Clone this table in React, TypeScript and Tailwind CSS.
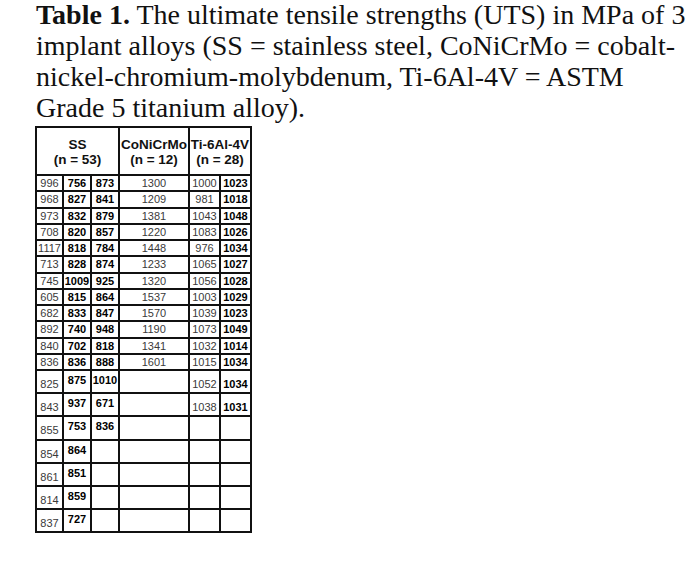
import React from "react";

type Cell = number | "";

const upper: Cell[][] = [
  [996, 756, 873, 1300, 1000, 1023],
  [968, 827, 841, 1209, 981, 1018],
  [973, 832, 879, 1381, 1043, 1048],
  [708, 820, 857, 1220, 1083, 1026],
  [1117, 818, 784, 1448, 976, 1034],
  [713, 828, 874, 1233, 1065, 1027],
  [745, 1009, 925, 1320, 1056, 1028],
  [605, 815, 864, 1537, 1003, 1029],
  [682, 833, 847, 1570, 1039, 1023],
  [892, 740, 948, 1190, 1073, 1049],
  [840, 702, 818, 1341, 1032, 1014],
  [836, 836, 888, 1601, 1015, 1034],
];

const lower: Cell[][] = [
  [825, 875, 1010, "", 1052, 1034],
  [843, 937, 671, "", 1038, 1031],
  [855, 753, 836, "", "", ""],
  [854, 864, "", "", "", ""],
  [861, 851, "", "", "", ""],
  [814, 859, "", "", "", ""],
  [837, 727, "", "", "", ""],
];

const bold = [false, true, true, false, false, true];

export default function App() {
  return (
    <div className="w-[700px] h-[579px] bg-white overflow-hidden">
      <div className="pl-[36px] pt-0">
        <div
          className="text-[28px] leading-[31px] text-[#111] whitespace-nowrap mt-[-1px]"
          style={{ fontFamily: '"Liberation Serif", "Times New Roman", serif' }}
        >
          <div>
            <span className="font-bold">Table 1.</span> The ultimate tensile strengths (UTS) in MPa of 3
          </div>
          <div>implant alloys (SS = stainless steel, CoNiCrMo = cobalt-</div>
          <div>nickel-chromium-molybdenum, Ti-6Al-4V = ASTM</div>
          <div>Grade 5 titanium alloy).</div>
        </div>
      </div>
      <div className="pl-[35px] mt-[3px]">
        <table
          className="border-collapse table-fixed border-2 border-[#111]"
          style={{ fontFamily: '"Liberation Sans", Arial, sans-serif' }}
        >
          <colgroup>
            <col className="w-[27px]" />
            <col className="w-[28px]" />
            <col className="w-[28px]" />
            <col className="w-[70px]" />
            <col className="w-[31px]" />
            <col className="w-[31px]" />
          </colgroup>
          <thead>
            <tr className="h-[48px]">
              <th
                colSpan={3}
                className="border-2 border-[#111] text-[13.5px] leading-[15px] font-bold text-[#111] align-middle pt-[2px] p-0"
              >
                SS
                <br />
                (n = 53)
              </th>
              <th className="border-2 border-[#111] text-[13.5px] leading-[15px] font-bold text-[#111] align-middle pt-[2px] p-0 whitespace-nowrap">
                CoNiCrMo
                <br />
                (n = 12)
              </th>
              <th
                colSpan={2}
                className="border-2 border-[#111] text-[13.5px] leading-[15px] font-bold text-[#111] align-middle pt-[2px] p-0 whitespace-nowrap"
              >
                Ti-6Al-4V
                <br />
                (n = 28)
              </th>
            </tr>
          </thead>
          <tbody>
            {upper.map((row, i) => (
              <tr key={"u" + i} className="h-[16.25px]">
                {row.map((v, j) => (
                  <td
                    key={j}
                    className={
                      "border-2 border-[#111] p-0 text-center align-middle text-[11px] leading-[12px] whitespace-nowrap " +
                      (bold[j] ? "font-bold text-[#000]" : "text-[#3a3a3a]")
                    }
                  >
                    {v}
                  </td>
                ))}
              </tr>
            ))}
            {lower.map((row, i) => (
              <tr key={"l" + i} className="h-[23.2px]">
                {row.map((v, j) => (
                  <td
                    key={j}
                    className={
                      "border-2 border-[#111] p-0 text-center align-top text-[11px] leading-[14px] whitespace-nowrap " +
                      (j === 1 || j === 2 ? "pt-[2px] " : "pt-[6px] ") +
                      (bold[j] ? "font-bold text-[#000]" : "text-[#3a3a3a]")
                    }
                  >
                    {v}
                  </td>
                ))}
              </tr>
            ))}
          </tbody>
        </table>
      </div>
    </div>
  );
}
